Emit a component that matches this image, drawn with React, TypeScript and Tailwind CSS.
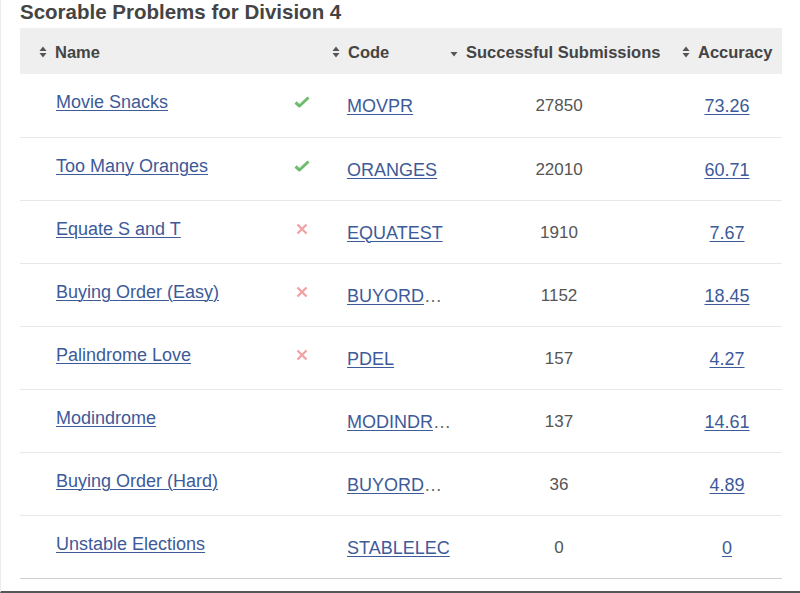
import React from "react";

type Row = {
  name: string;
  status: "ok" | "bad" | null;
  code: string;
  count: number;
  acc: string;
};

const rows: Row[] = [
  { name: "Movie Snacks", status: "ok", code: "MOVPR", count: 27850, acc: "73.26" },
  { name: "Too Many Oranges", status: "ok", code: "ORANGES", count: 22010, acc: "60.71" },
  { name: "Equate S and T", status: "bad", code: "EQUATEST", count: 1910, acc: "7.67" },
  { name: "Buying Order (Easy)", status: "bad", code: "BUYORDEREASY", count: 1152, acc: "18.45" },
  { name: "Palindrome Love", status: "bad", code: "PDEL", count: 157, acc: "4.27" },
  { name: "Modindrome", status: null, code: "MODINDROME", count: 137, acc: "14.61" },
  { name: "Buying Order (Hard)", status: null, code: "BUYORDERHARD", count: 36, acc: "4.89" },
  { name: "Unstable Elections", status: null, code: "STABLELEC", count: 0, acc: "0" },
];

const SortIcon = () => (
  <svg width="8" height="12" viewBox="0 0 8 12" className="inline-block mr-2 -mt-0.5">
    <path d="M4 0.5 L7.5 5 L0.5 5 Z" fill="#555" />
    <path d="M4 11.5 L7.5 7 L0.5 7 Z" fill="#555" />
  </svg>
);

const DownIcon = () => (
  <svg width="8" height="12" viewBox="0 0 8 12" className="inline-block mr-2 -mt-0.5">
    <path d="M4 10.5 L7.5 6 L0.5 6 Z" fill="#555" />
  </svg>
);

const Check = () => (
  <svg width="16" height="12" viewBox="0 0 16 12">
    <path d="M1.5 6.5 L5.5 10 L14.5 1.5" stroke="#6cbd6f" strokeWidth="3" fill="none" strokeLinejoin="round" />
  </svg>
);

const Cross = () => (
  <svg width="12" height="12" viewBox="0 0 12 12">
    <path d="M1.5 1.5 L10.5 10.5 M10.5 1.5 L1.5 10.5" stroke="#f0a3a3" strokeWidth="2.4" />
  </svg>
);

const linkCls = "text-[#3d5a99] underline underline-offset-2 decoration-1";

export default function App() {
  return (
    <div
      className="w-[800px] h-[593px] bg-white overflow-hidden border-l border-[#ececec] border-b-2 border-b-[#555]"
      style={{ fontFamily: '"Liberation Sans", Arial, sans-serif' }}
    >
      <h2 className="pl-[19px] h-[28px] text-[20.5px] font-bold text-[#444] leading-[24px]">
        Scorable Problems for Division 4
      </h2>
      <table className="ml-[19px] w-[762px] table-fixed border-collapse">
        <colgroup>
          <col className="w-[263px]" />
          <col className="w-[37px]" />
          <col className="w-[126px]" />
          <col className="w-[226px]" />
          <col className="w-[110px]" />
        </colgroup>
        <thead>
          <tr className="bg-[#efefef] h-[46px] text-[16.5px] font-bold text-[#444]">
            <th colSpan={2} className="text-left pl-[19px] pt-[2px]">
              <SortIcon />
              Name
            </th>
            <th className="text-left pl-[12px] pt-[2px]">
              <SortIcon />
              Code
            </th>
            <th className="text-left pl-[4px] pt-[2px] whitespace-nowrap">
              <DownIcon />
              Successful Submissions
            </th>
            <th className="text-left pl-[10px] pt-[2px] whitespace-nowrap">
              <SortIcon />
              Accuracy
            </th>
          </tr>
        </thead>
        <tbody>
          {rows.map((r, i) => (
            <tr
              key={r.code}
              className={`h-[63px] border-b ${i === rows.length - 1 ? "border-[#cfcfcf]" : "border-[#e8e8e8]"}`}
            >
              <td className="pl-[36px] align-top pt-[18px] text-[18px] leading-[20px]">
                <a className={linkCls} href="#">
                  {r.name}
                </a>
              </td>
              <td className="align-top pt-[22px]">
                <div className="flex justify-center">
                  {r.status === "ok" ? <Check /> : r.status === "bad" ? <Cross /> : null}
                </div>
              </td>
              <td className="pl-[27px] align-top pt-[22px] text-[18px] leading-[20px]">
                <div className="w-[106px] truncate text-[#666]">
                  <a className={linkCls} href="#">
                    {r.code}
                  </a>
                </div>
              </td>
              <td className="text-center align-top pt-[22px] text-[17px] leading-[20px] text-[#555]">
                {r.count}
              </td>
              <td className="text-center align-top pt-[22px] text-[18px] leading-[20px]">
                <a className={linkCls} href="#">
                  {r.acc}
                </a>
              </td>
            </tr>
          ))}
        </tbody>
      </table>
    </div>
  );
}
